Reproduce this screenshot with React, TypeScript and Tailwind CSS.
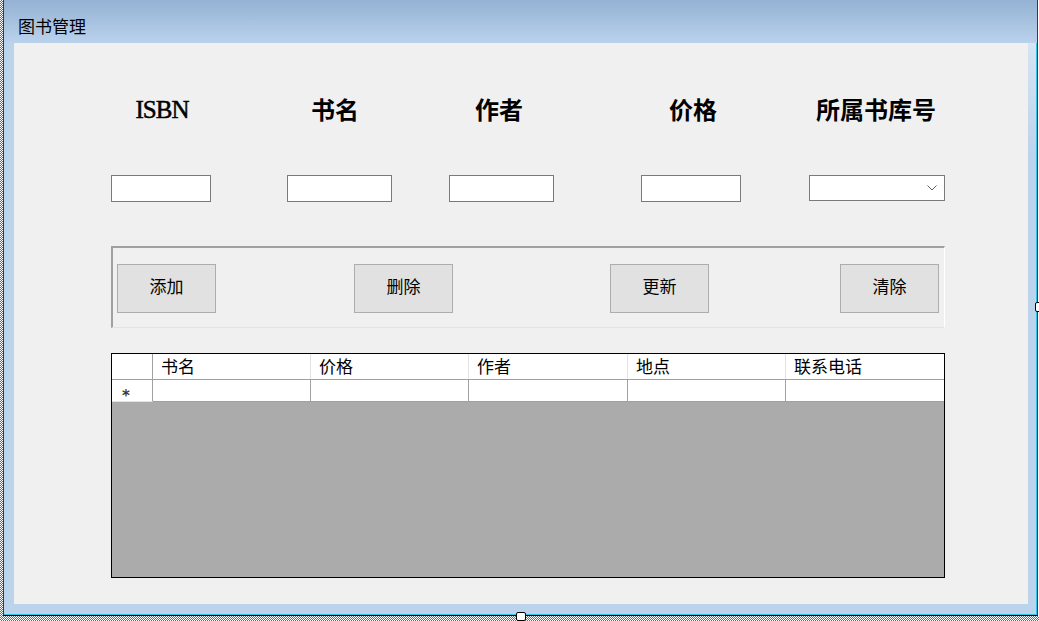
const cjk = "font-['Noto_Sans_CJK_SC','Noto_Sans',sans-serif]";

const labels = [
  { text: "ISBN", ml: "ml-[78px]", latin: true },
  { text: "书名", ml: "ml-[33px]" },
  { text: "作者", ml: "ml-[24px]" },
  { text: "价格", ml: "ml-[54px]" },
  { text: "所属书库号", ml: "ml-[43px]" },
];

const buttons = [
  { text: "添加", ml: "ml-0" },
  { text: "删除", ml: "ml-[138px]" },
  { text: "更新", ml: "ml-[157px]" },
  { text: "清除", ml: "ml-[131px]" },
];

const columns = [
  { title: "书名", w: "w-[158px]" },
  { title: "价格", w: "w-[158px]" },
  { title: "作者", w: "w-[159px]" },
  { title: "地点", w: "w-[158px]" },
  { title: "联系电话", w: "flex-1" },
];

const TextBox = ({ className }: { className: string }) => (
  <div className={`h-[27px] border border-[#7a7a7a] bg-white ${className}`} />
);

const ComboBox = () => (
  <div className="ml-[68px] flex h-[26px] w-[136px] items-center justify-end border border-[#7a7a7a] bg-white pr-[7px]">
    <svg width="10" height="6" viewBox="0 0 10 6" fill="none">
      <polyline points="0.5,0.5 5,5 9.5,0.5" stroke="#606060" strokeWidth="1" />
    </svg>
  </div>
);

const BookForm = () => {
  return (
    <div className="flex h-[561px] w-[1014px] flex-col bg-[#f0f0f0]">
      {/* labels */}
      <div className="mt-[50px] flex h-[32px] items-center">
        {labels.map((l) => (
          <div
            key={l.text}
            className={`${l.ml} w-[140px] text-center text-black ${
              l.latin
                ? "mt-[2px] font-['Liberation_Serif',serif] text-[25px] tracking-[-1px] [-webkit-text-stroke:0.5px_black]"
                : `${cjk} text-[24px] font-bold`
            }`}
          >
            {l.text}
          </div>
        ))}
      </div>

      {/* inputs */}
      <div className="ml-[97px] mt-[50px] flex items-start">
        <TextBox className="w-[100px]" />
        <TextBox className="ml-[76px] w-[105px]" />
        <TextBox className="ml-[57px] w-[105px]" />
        <TextBox className="ml-[87px] w-[100px]" />
        <ComboBox />
      </div>

      {/* button group */}
      <div className="ml-[97px] mt-[44px] flex h-[82px] w-[834px] items-start border-t-2 border-l-2 border-t-[#a0a0a0] border-l-[#a0a0a0] border-r border-b border-r-white border-b-[#e3e3e3] pl-[4px] pt-[16px]">
        {buttons.map((b) => (
          <button
            key={b.text}
            className={`${b.ml} flex h-[49px] w-[99px] items-center justify-center border border-[#adadad] bg-[#e1e1e1] pb-[5px] text-[17px] text-black ${cjk}`}
          >
            {b.text}
          </button>
        ))}
      </div>

      {/* data grid */}
      <div className="ml-[97px] mt-[25px] flex h-[225px] w-[834px] flex-col border border-black bg-[#ababab]">
        <div className={`flex h-[26px] border-b border-[#a0a0a0] bg-white text-[17px] leading-none text-black ${cjk}`}>
          <div className="w-[41px] border-r border-[#a0a0a0]" />
          {columns.map((c, i) => (
            <div
              key={c.title}
              className={`${c.w} flex items-center pl-[8px] pb-[3px] ${
                i < columns.length - 1 ? "border-r border-[#e3e3e3]" : ""
              }`}
            >
              {c.title}
            </div>
          ))}
        </div>
        <div className="flex h-[22px] bg-white">
          <div className="flex w-[41px] items-center border-r border-b border-r-[#a0a0a0] border-b-[#e3e3e3] pl-[10px] pt-[11px] font-['DejaVu_Sans',sans-serif] text-[15px] font-bold leading-none text-[#3a3a3a]">
            *
          </div>
          {columns.map((c, i) => (
            <div
              key={c.title}
              className={`${c.w} border-b border-[#a0a0a0] ${
                i < columns.length - 1 ? "border-r" : ""
              }`}
            />
          ))}
        </div>
      </div>
    </div>
  );
};

export default function App() {
  return (
    <div className="relative h-[621px] w-[1039px] overflow-hidden bg-white">
      <div className="flex h-[621px] flex-col">
        <div className="flex h-[616px]">
          <div className="w-[3px] bg-[image:repeating-conic-gradient(#6b6b6b_0%_25%,#ffffff_0%_50%)] bg-[length:2px_2px]" />
          {/* designer window */}
          <div className="flex w-[1035px] flex-col border-l border-r border-b border-l-[#3a3a3a] border-r-[#3a3a3a] border-b-black">
            <div className={`flex h-[43px] items-center bg-linear-to-b from-[#94b2d3] to-[#bad2ec] pl-[14px] pt-[9px] text-[17px] text-black ${cjk}`}>
              图书管理
            </div>
            <div className="flex flex-1 bg-[#bcd3ec]">
              <div className="w-[10px]" />
              <div className="flex flex-col">
                <BookForm />
                <div className="h-[10px]" />
              </div>
              <div className="w-[8px] bg-linear-to-b from-[#d6e4f3] from-0% to-[#bcd3ec] to-20%" />
              <div className="w-px bg-[#2ec6e6]" />
            </div>
            <div className="h-px bg-[#2ec6e6]" />
          </div>
        </div>
        <div className="h-[5px] bg-[image:repeating-conic-gradient(#6b6b6b_0%_25%,#ffffff_0%_50%)] bg-[length:2px_2px]" />
      </div>

      {/* resize handles */}
      <div className="absolute left-[516px] top-[612px] h-[9px] w-[10px] rounded-[2px] border border-black bg-white" />
      <div className="absolute left-[1035px] top-[302px] h-[10px] w-[6px] rounded-[2px] border border-black bg-white" />
    </div>
  );
}
